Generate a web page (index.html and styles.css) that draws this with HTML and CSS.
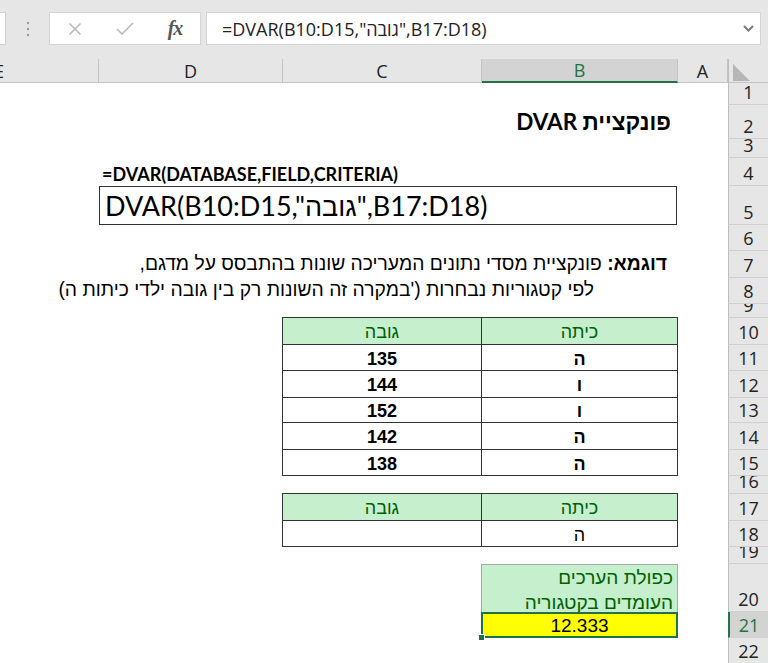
FILE: index.html
```html
<!DOCTYPE html>
<html lang="he">
<head>
  <meta charset="UTF-8">
  <title>פונקציית DVAR</title>
  <link rel="stylesheet" href="styles.css">
</head>
<body>
  <div class="app">
    <div class="formula-bar">
      <div class="name-box"></div>
      <div class="grip">
        <svg width="4" height="16" viewBox="0 0 4 16"><circle cx="2" cy="2" r="1.2"/><circle cx="2" cy="8" r="1.2"/><circle cx="2" cy="14" r="1.2"/></svg>
      </div>
      <div class="fx-box">
        <span class="fx-slot">
          <svg width="14" height="12" viewBox="0 0 14 12"><path d="M1.5 0.5 L12.5 11.5 M12.5 0.5 L1.5 11.5"/></svg>
        </span>
        <span class="fx-slot">
          <svg width="18" height="13" viewBox="0 0 18 13"><path d="M1 7 L6 12 L17 1"/></svg>
        </span>
        <span class="fx-slot fx">fx</span>
      </div>
      <div class="formula-input">
        <span class="formula-text">=DVAR(B10:D15,"גובה",B17:D18)</span>
        <svg class="chevron" width="11" height="7" viewBox="0 0 11 7"><path d="M1 1 L5.5 5.5 L10 1"/></svg>
      </div>
    </div>

    <div class="sheet">
      <!-- column headers -->
      <div class="col-head">E</div>
      <div class="col-head">D</div>
      <div class="col-head">C</div>
      <div class="col-head selected">B</div>
      <div class="col-head">A</div>
      <div class="corner">
        <svg width="18" height="18" viewBox="0 0 18 18"><path d="M0 0 L0 17 L17 17 Z"/></svg>
      </div>

      <!-- row headers -->
      <div class="row-head" style="grid-row: 2">1</div>
      <div class="row-head" style="grid-row: 3">2</div>
      <div class="row-head" style="grid-row: 4">3</div>
      <div class="row-head" style="grid-row: 5">4</div>
      <div class="row-head" style="grid-row: 6">5</div>
      <div class="row-head" style="grid-row: 7">6</div>
      <div class="row-head" style="grid-row: 8">7</div>
      <div class="row-head" style="grid-row: 9">8</div>
      <div class="row-head" style="grid-row: 10">9</div>
      <div class="row-head" style="grid-row: 11">10</div>
      <div class="row-head" style="grid-row: 12">11</div>
      <div class="row-head" style="grid-row: 13">12</div>
      <div class="row-head" style="grid-row: 14">13</div>
      <div class="row-head" style="grid-row: 15">14</div>
      <div class="row-head" style="grid-row: 16">15</div>
      <div class="row-head" style="grid-row: 17">16</div>
      <div class="row-head" style="grid-row: 18">17</div>
      <div class="row-head" style="grid-row: 19">18</div>
      <div class="row-head" style="grid-row: 20">19</div>
      <div class="row-head" style="grid-row: 21">20</div>
      <div class="row-head selected" style="grid-row: 22">21</div>
      <div class="row-head" style="grid-row: 23">22</div>

      <!-- content -->
      <div class="title" dir="rtl">פונקציית DVAR</div>
      <div class="syntax">=DVAR(DATABASE,FIELD,CRITERIA)</div>
      <div class="formula-box">DVAR(B10:D15,"גובה",B17:D18)</div>
      <div class="note note-1" dir="rtl"><span><b>דוגמא:</b> פונקציית מסדי נתונים המעריכה שונות בהתבסס על מדגם,</span></div>
      <div class="note note-2" dir="rtl"><span>לפי קטגוריות נבחרות ('במקרה זה השונות רק בין גובה ילדי כיתות ה)</span></div>

      <div class="t head col-c" style="grid-row: 11">גובה</div>
      <div class="t head col-b" style="grid-row: 11">כיתה</div>
      <div class="t num col-c" style="grid-row: 12">135</div>
      <div class="t num col-b" style="grid-row: 12">ה</div>
      <div class="t num col-c" style="grid-row: 13">144</div>
      <div class="t num col-b" style="grid-row: 13">ו</div>
      <div class="t num col-c" style="grid-row: 14">152</div>
      <div class="t num col-b" style="grid-row: 14">ו</div>
      <div class="t num col-c" style="grid-row: 15">142</div>
      <div class="t num col-b" style="grid-row: 15">ה</div>
      <div class="t num col-c" style="grid-row: 16">138</div>
      <div class="t num col-b" style="grid-row: 16">ה</div>

      <div class="t head col-c" style="grid-row: 18">גובה</div>
      <div class="t head col-b" style="grid-row: 18">כיתה</div>
      <div class="t col-c" style="grid-row: 19"></div>
      <div class="t col-b" style="grid-row: 19">ה</div>

      <div class="label-cell" dir="rtl">כפולת הערכים<br>העומדים בקטגוריה</div>
      <div class="result-cell">12.333<span class="fill-handle"></span></div>
    </div>
  </div>
</body>
</html>
```

FILE: styles.css
```css
* {
  box-sizing: border-box;
}
body {
  margin: 0;
  font-family: "Liberation Sans", Arial, sans-serif;
  background: #fff;
  color: #000;
}
.app {
  width: 768px;
  height: 663px;
  overflow: hidden;
}

/* formula bar */
.formula-bar {
  height: 59px;
  background: #e6e6e6;
  display: flex;
  align-items: flex-start;
  padding-top: 12px;
}
.name-box {
  width: 6px;
  height: 33px;
  background: #fff;
  border: 1px solid #d0d0d0;
  border-left: none;
}
.grip {
  width: 43px;
  height: 33px;
  display: flex;
  align-items: center;
  justify-content: center;
}
.grip svg {
  fill: #9a9a9a;
}
.fx-box {
  width: 152px;
  height: 33px;
  background: #fff;
  border: 1px solid #d4d4d4;
  display: flex;
  align-items: center;
}
.fx-slot {
  flex: 1;
  display: flex;
  justify-content: center;
  align-items: center;
}
.fx-slot svg {
  fill: none;
  stroke: #b8b8b8;
  stroke-width: 1.5;
}
.fx {
  font-family: "Liberation Serif", "Times New Roman", serif;
  font-style: italic;
  font-weight: bold;
  font-size: 20px;
  color: #555;
  letter-spacing: -1px;
}
.formula-input {
  width: 555px;
  height: 33px;
  margin-left: 5px;
  background: #fff;
  border: 1px solid #d4d4d4;
  display: flex;
  align-items: center;
  padding: 0 6px 0 15px;
}
.formula-text {
  flex: 1;
  font-family: "Open Sans", "Liberation Sans", sans-serif;
  font-size: 18px;
  color: #222;
}
.chevron {
  fill: none;
  stroke: #7a7a7a;
  stroke-width: 2;
}

/* sheet grid */
.sheet {
  display: grid;
  grid-template-columns: 99px 184px 199px 196px 50px 40px;
  grid-template-rows: 24px 22px 34px 19px 28px 39px 26px 27px 26px 14px 27px 26px 27px 25px 27px 26px 18px 27px 26px 17px 48px 26px 26px;
}
.col-head {
  grid-row: 1;
  background: #e6e6e6;
  border-right: 1px solid #c4c4c4;
  border-bottom: 1px solid #c4c4c4;
  font-family: "Open Sans", sans-serif;
  font-size: 18px;
  color: #222;
  display: flex;
  align-items: center;
  justify-content: center;
  overflow: hidden;
}
.col-head:first-child {
  justify-content: flex-start;
  text-indent: -6px;
}
.col-head.selected {
  background: #d3d3d3;
  color: #217346;
  border-bottom: 2px solid #217346;
}
.corner {
  grid-row: 1;
  grid-column: 6;
  background: #e6e6e6;
  border-left: 1px solid #bdbdbd;
  border-bottom: 1px solid #c4c4c4;
  padding: 5px 0 0 4px;
}
.corner svg {
  fill: #b6b6b6;
}
.row-head {
  grid-column: 6;
  background: #e6e6e6;
  border-left: 1px solid #bdbdbd;
  border-bottom: 1px solid #d0d0d0;
  font-family: "Open Sans", sans-serif;
  font-size: 18px;
  line-height: 22px;
  color: #222;
  display: flex;
  align-items: flex-end;
  justify-content: center;
  padding-bottom: 1px;
  overflow: hidden;
}
.row-head.selected {
  background: #d3d3d3;
  color: #217346;
  border-left: 2px solid #217346;
}

/* content cells */
.title {
  grid-row: 3;
  grid-column: 2 / 5;
  font-family: Lato, "Liberation Sans", sans-serif;
  font-weight: bold;
  font-size: 22.5px;
  white-space: nowrap;
  display: flex;
  align-items: flex-end;
  padding: 0 7px 3px 0;
}
.syntax {
  grid-row: 5;
  grid-column: 2 / 6;
  font-family: Lato, "Liberation Sans", sans-serif;
  font-weight: bold;
  font-size: 18px;
  white-space: nowrap;
  display: flex;
  align-items: flex-end;
  padding: 0 0 1px 3px;
}
.formula-box {
  grid-row: 6;
  grid-column: 2 / 5;
  border: 1px solid #333;
  margin-right: 1px;
  font-family: Lato, "Liberation Sans", sans-serif;
  font-size: 27px;
  white-space: nowrap;
  display: flex;
  align-items: center;
  padding-left: 5px;
}
.note {
  grid-column: 1 / 5;
  font-size: 19.3px;
  white-space: nowrap;
  display: flex;
  align-items: flex-end;
  padding-bottom: 3px;
}
.note-1 {
  grid-row: 8;
  padding-right: 11px;
}
.note-2 {
  grid-row: 9;
  padding-right: 84px;
}

.t {
  border: 1px solid #333;
  margin: -1px 0 0 -1px;
  font-size: 18px;
  display: flex;
  align-items: center;
  justify-content: center;
  padding-top: 3px;
}
.t.col-c {
  grid-column: 3;
}
.t.col-b {
  grid-column: 4;
}
.t.head {
  background: #c6efce;
  color: #006100;
}
.t.num {
  font-weight: bold;
}
.label-cell {
  grid-row: 21;
  grid-column: 4;
  background: #c6efce;
  color: #006100;
  border: 1px solid #a9a9a9;
  margin: 0 0 -1px -1px;
  font-size: 19px;
  line-height: 25px;
  text-align: right;
  padding-right: 4px;
}
.result-cell {
  grid-row: 22;
  grid-column: 4;
  background: #ffff00;
  border: 2px solid #217346;
  margin: 0 0 0 -1px;
  font-size: 19px;
  display: flex;
  align-items: center;
  justify-content: center;
  padding-top: 2px;
  position: relative;
}
.fill-handle {
  position: absolute;
  left: -5px;
  bottom: -5px;
  width: 7px;
  height: 7px;
  background: #217346;
  border: 1px solid #fff;
}
```
